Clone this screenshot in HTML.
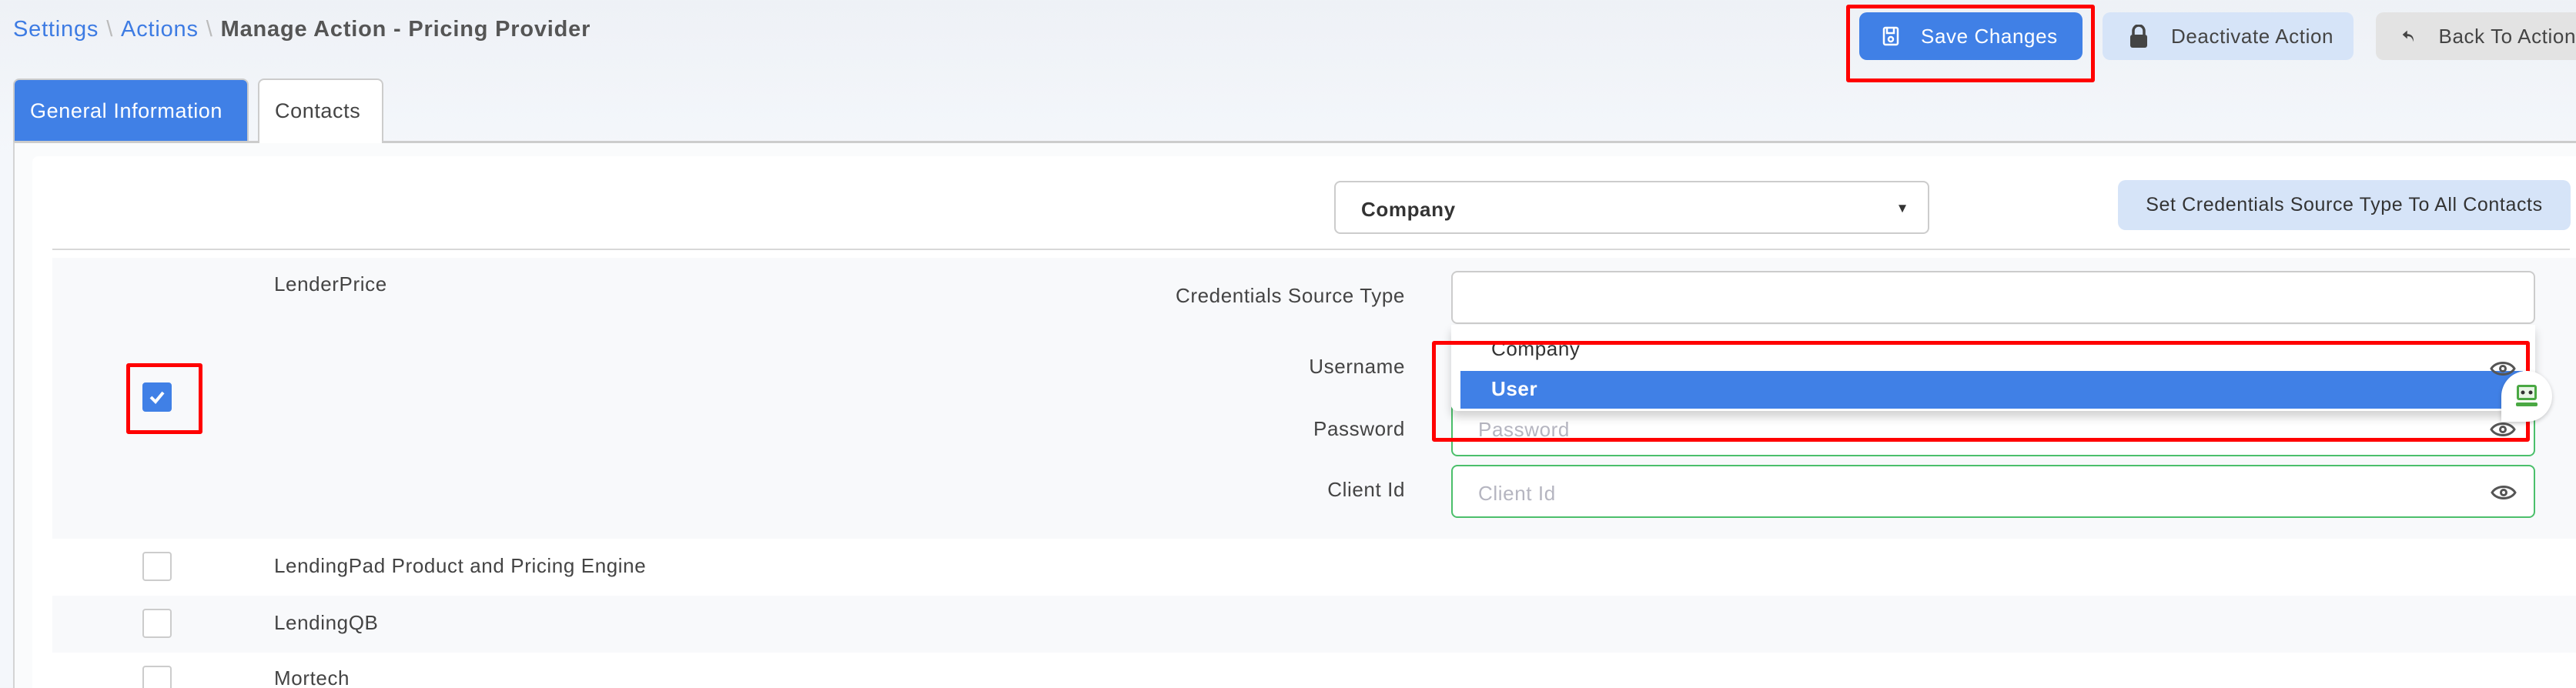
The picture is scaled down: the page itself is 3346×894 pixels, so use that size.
<!DOCTYPE html>
<html style="width:3346px;height:894px;overflow:hidden"><head><meta charset="utf-8"><style>
*{box-sizing:border-box;margin:0;padding:0}
body{width:3346px;height:894px;overflow:hidden;background:linear-gradient(#eef1f6,#f4f7fb 200px);font-family:"Liberation Sans",sans-serif;color:#444;position:relative;font-size:26px;letter-spacing:0.6px}
.a{position:absolute}
.bc{left:17px;top:22px;font-size:29px;color:#3d7be3;white-space:nowrap;letter-spacing:0.8px}
.bc .sep{color:#bbb;margin:0 10px}
.bc b{color:#555}
.btn{border-radius:10px;display:flex;align-items:center;font-size:26px;white-space:nowrap}
.red{border:5px solid #f00;border-radius:3px}
.panel{left:17px;top:183px;width:3329px;height:711px;background:#fafbfc;border-left:2px solid #d4d4d4;border-top:3px solid #ccc}
.card{left:42px;top:203px;width:3304px;height:691px;background:#fff;border-radius:8px 0 0 0}
.lbl{text-align:right;width:500px;left:1325px;color:#444}
.inp{left:1885px;width:1408px;height:69px;border-radius:8px;background:#fff}
.ph{color:#b5b5c0;position:absolute;left:33px;top:20px}
.cb{left:185px;width:38px;height:38px;border:2px solid #ccc;border-radius:4px;background:#fff}
.eye{position:absolute;right:22px;top:22px}
</style></head><body>
<div class="a bc">Settings<span class="sep">\</span>Actions<span class="sep">\</span><b>Manage Action - Pricing Provider</b></div>

<div class="a red" style="left:2398px;top:6px;width:323px;height:101px"></div>
<div class="a btn" style="left:2415px;top:16px;width:290px;height:62px;background:#4080e6;color:#fff;padding-left:30px">
<svg width="22" height="26" viewBox="0 0 22 26" fill="none" stroke="#fff" stroke-width="2.5"><rect x="2" y="2" width="18" height="22" rx="2"/><path d="M6 2v7h9V2"/><circle cx="11" cy="17" r="3"/></svg><span style="margin-left:28px">Save Changes</span></div>
<div class="a btn" style="left:2731px;top:16px;width:326px;height:62px;background:#d6e4f8;color:#444;padding-left:35px">
<svg width="24" height="30" viewBox="0 0 24 30"><path d="M5 13V8a7 7 0 0 1 14 0v5" fill="none" stroke="#444" stroke-width="3.5"/><rect x="1" y="13" width="22" height="17" rx="3" fill="#444"/></svg><span style="margin-left:30px">Deactivate Action</span></div>
<div class="a btn" style="left:3086px;top:16px;width:260px;height:62px;background:#e3e3e3;color:#444;padding-left:34px;border-radius:10px 0 0 10px;overflow:hidden">
<svg width="26" height="26" viewBox="0 0 26 26"><path d="M10 2L1 10l9 8v-5c7 0 10 3 12 11 1-9-3-15-12-15z" fill="#444"/></svg><span style="margin-left:30px">Back To Action</span></div>

<div class="a" style="left:17px;top:102px;width:306px;height:81px;background:#4080e6;border-radius:8px 8px 0 0;border:2px solid #ccc;border-bottom:none;color:#fff;font-size:27px;padding:25px 0 0 20px">General Information</div>
<div class="a" style="left:335px;top:102px;width:163px;height:84px;background:#fff;border-radius:8px 8px 0 0;border:2px solid #ccc;border-bottom:none;font-size:27px;padding:25px 0 0 20px;z-index:2">Contacts</div>
<div class="a panel"></div>
<div class="a card"></div>

<div class="a" style="left:1733px;top:235px;width:773px;height:69px;border:2px solid #ccc;border-radius:8px;background:#fff;font-weight:bold;color:#333;padding:20px 0 0 33px">Company<span style="position:absolute;right:24px;top:24px;font-size:17px;color:#333">▼</span></div>
<div class="a btn" style="left:2751px;top:234px;width:588px;height:65px;background:#d6e4f8;color:#333;justify-content:center;font-size:25px">Set Credentials Source Type To All Contacts</div>
<div class="a" style="left:68px;top:323px;width:3270px;height:2px;background:#d8d8d8"></div>

<div class="a" style="left:68px;top:335px;width:3278px;height:365px;background:#f8f9fb"></div>
<div class="a" style="left:68px;top:774px;width:3278px;height:74px;background:#f8f9fb"></div>

<div class="a" style="left:356px;top:354px">LenderPrice</div>
<div class="a" style="left:356px;top:720px">LendingPad Product and Pricing Engine</div>
<div class="a" style="left:356px;top:794px">LendingQB</div>
<div class="a" style="left:356px;top:866px">Mortech</div>

<div class="a cb" style="top:497px;background:#4080e6;border-color:#4080e6"><svg width="34" height="34" viewBox="0 0 34 34"><path d="M9 17l6 6 10-12" fill="none" stroke="#fff" stroke-width="4"/></svg></div>
<div class="a red" style="left:164px;top:472px;width:99px;height:92px"></div>
<div class="a cb" style="top:717px"></div>
<div class="a cb" style="top:791px"></div>
<div class="a cb" style="top:865px"></div>

<div class="a lbl" style="top:369px">Credentials Source Type</div>
<div class="a lbl" style="top:461px">Username</div>
<div class="a lbl" style="top:542px">Password</div>
<div class="a lbl" style="top:621px">Client Id</div>

<div class="a inp" style="top:352px;border:2px solid #ccc"></div>
<div class="a inp" style="top:523px;border:2px solid #4bbf6b;height:70px"><span class="ph" style="top:18px">Password</span></div>
<div class="a inp" style="top:604px;border:2px solid #4bbf6b"><span class="ph">Client Id</span>
<svg class="eye" width="34" height="24" viewBox="0 0 34 24"><path d="M2 12C8 2 26 2 32 12 26 22 8 22 2 12z" fill="none" stroke="#555" stroke-width="3"/><circle cx="17" cy="12" r="5" fill="#555"/><circle cx="17" cy="12" r="2" fill="#fff"/></svg></div>

<div class="a" style="left:1885px;top:422px;width:1408px;height:112px;background:#fff;border-radius:0 0 8px 8px;box-shadow:0 8px 12px rgba(0,0,0,.18)">
<div class="a" style="left:52px;top:16px;color:#333">Company</div>
<div class="a" style="left:12px;top:60px;width:1380px;height:49px;background:#4080e6;color:#fff;font-weight:bold;padding:8px 0 0 40px">User</div>
</div>
<svg class="a" style="left:3234px;top:467px" width="34" height="24" viewBox="0 0 34 24"><path d="M2 12C8 2 26 2 32 12 26 22 8 22 2 12z" fill="none" stroke="#555" stroke-width="3"/><circle cx="17" cy="12" r="5" fill="#555"/><circle cx="17" cy="12" r="2" fill="#fff"/></svg>
<svg class="a" style="left:3234px;top:546px" width="34" height="24" viewBox="0 0 34 24"><path d="M2 12C8 2 26 2 32 12 26 22 8 22 2 12z" fill="none" stroke="#555" stroke-width="3"/><circle cx="17" cy="12" r="5" fill="#555"/><circle cx="17" cy="12" r="2" fill="#fff"/></svg>
<div class="a" style="left:1860px;top:443px;width:1426px;height:131px;border:5px solid #f00;border-radius:3px"></div>
<div class="a" style="left:3249px;top:482px;width:66px;height:66px;background:#fff;border-radius:33px 33px 33px 0;box-shadow:0 2px 6px rgba(0,0,0,.2)">
<svg style="position:absolute;left:17px;top:16px" width="32" height="32" viewBox="0 0 32 32"><rect x="3" y="2" width="26" height="20" rx="3" fill="#4aa843"/><rect x="6" y="5" width="20" height="14" fill="#e8f5e6"/><circle cx="11" cy="12" r="2.5" fill="#333"/><circle cx="21" cy="12" r="2.5" fill="#333"/><rect x="2" y="25" width="28" height="5" rx="2" fill="#4aa843"/></svg></div>
</body></html>
